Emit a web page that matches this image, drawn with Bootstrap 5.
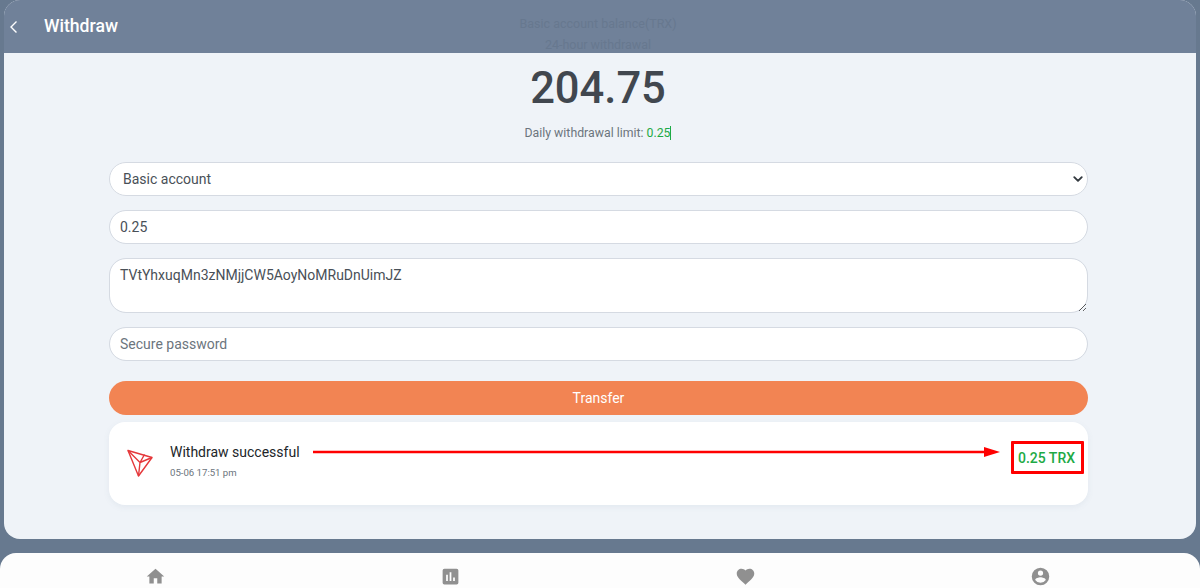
<!DOCTYPE html>
<html lang="en">
<head>
<meta charset="utf-8">
<title>Withdraw</title>
<link href="https://cdn.jsdelivr.net/npm/bootstrap@5.3.0/dist/css/bootstrap.min.css" rel="stylesheet">
<style>
html,body{height:588px;overflow:hidden}
body{background:#67798f;font-family:Roboto,"Liberation Sans",sans-serif;color:#495057;font-size:14px}
.shell{width:1192px;margin:0 4px;height:539px;background:#eff3f8;border-radius:16px;overflow:hidden}
.topbar{height:53px;background:#708199;display:grid;grid-template-columns:1fr auto 1fr;align-items:center;margin:0 -4px;padding:0 13px 0 9px;width:1200px}
.topbar-title{font-size:17.6px;font-weight:500;color:#fff;margin-left:26px;line-height:1}
.back-ico{width:9px;height:14px;flex:none}
.ghost{color:#67788f;font-size:12.5px;text-align:center;line-height:21px;padding-top:13px;height:53px;overflow:hidden}
.mainarea{padding-right:4px}
.amount{font-size:43.5px;font-weight:500;line-height:52px;color:#41474f;margin-top:10px}
.limit{font-size:12.3px;color:#6c757d;line-height:18px;margin-top:9px}
.limit b{font-weight:400;color:#1eaa45;border-right:1px solid #1eaa45}
.formwrap{width:979px;margin:20px 0 0 105px}
.formwrap .form-control,.formwrap .form-select{border-radius:17px;border:1px solid #d5dae2;background-color:#fff;font-size:14px;color:#495057;box-shadow:none}
.formwrap .form-select{height:34px;padding:0 36px 0 13px;margin-bottom:14px;background-position:right 3px center;background-size:12px 10px;background-image:url("data:image/svg+xml,%3csvg xmlns='http://www.w3.org/2000/svg' viewBox='0 0 16 16'%3e%3cpath fill='none' stroke='%23343a40' stroke-linecap='round' stroke-linejoin='round' stroke-width='3' d='m2 5 6 6 6-6'/%3e%3c/svg%3e")}
.formwrap input.form-control{height:34px;padding:0 10px;margin-bottom:14px}
.formwrap textarea.form-control{height:55px;padding:6px 10px;margin-bottom:14px;line-height:20px;border-radius:17px;min-height:0;resize:vertical}
.formwrap input.pw{margin-bottom:20px}
.formwrap ::placeholder{color:#6c757d;opacity:1}
.transfer{display:block;width:100%;height:34px;border:0;border-radius:17px;background:#f28453;color:#fff;font-size:14px;padding:0}
.rec{position:relative;height:83px;margin-top:7px;background:#fff;border-radius:16px;box-shadow:0 2px 6px rgba(90,110,140,.08);padding:0 17px;display:flex;align-items:center}
.rec-ico{width:26px;height:28px;flex:none;margin:-2px 17px 0 1px}
.rec-text{padding-bottom:6px}
.rec-t{font-size:14px;color:#212529;line-height:20px}
.rec-d{font-size:9.6px;color:#6c757d;line-height:14px;margin-top:4px}
.annot-arrow{position:absolute;left:204px;top:23px;width:687px;height:14px}
.annot-box{position:absolute;left:902px;top:19px;width:73px;height:33px;border:3px solid #f00;border-radius:1px}
.rec-a{position:absolute;left:902px;top:19px;width:73px;height:33px;padding:1px 2px 0 0;display:flex;align-items:center;justify-content:center;font-size:14px;color:#1eaa45;font-weight:500}
.tabbar{position:absolute;left:0;right:0;top:553px;height:35px;background:#fdfdfd;border-radius:16px 16px 0 0;display:grid;grid-template-columns:repeat(4,295px);padding:13px 0 0 8px;justify-items:center}
.tabbar svg{width:21px;height:21px;fill:#909090;display:block}
</style>
</head>
<body>
<div class="shell">
  <div class="topbar">
    <div class="d-flex align-items-center">
      <svg class="back-ico" viewBox="0 0 9 14"><path d="M7.5 1.5 2 7l5.5 5.5" fill="none" stroke="#fff" stroke-width="1.4"/></svg>
      <span class="topbar-title">Withdraw</span>
    </div>
    <div class="ghost">Basic account balance(TRX)<br>24-hour withdrawal</div>
    <div></div>
  </div>
  <div class="mainarea">
  <div class="text-center amount">204.75</div>
  <div class="text-center limit">Daily withdrawal limit: <b>0.25</b></div>
  <div class="formwrap">
    <select class="form-select"><option>Basic account</option></select>
    <input class="form-control" value="0.25">
    <textarea class="form-control">TVtYhxuqMn3zNMjjCW5AoyNoMRuDnUimJZ</textarea>
    <input class="form-control pw" placeholder="Secure password">
    <button class="transfer" type="button">Transfer</button>
    <div class="rec">
      <svg class="rec-ico" viewBox="0 0 26 28" fill="none" stroke="#e5383b" stroke-width="1.4" stroke-linejoin="round"><path d="M1 1.5 25 8.5 11.5 27Z"/><path d="M1 1.5 13 13.5 25 8.5M13 13.5 11.5 27M17.5 5.5 13 13.5"/></svg>
      <div class="rec-text">
        <div class="rec-t">Withdraw successful</div>
        <div class="rec-d">05-06 17:51 pm</div>
      </div>
      <svg class="annot-arrow" viewBox="0 0 687 14"><path d="M0 7H672" stroke="#f00" stroke-width="2.6"/><path d="M671 2 687 7 671 12Z" fill="#f00"/></svg>
      <div class="rec-a">0.25 TRX</div>
      <div class="annot-box"></div>
    </div>
  </div>
  </div>
</div>
<nav class="tabbar">
  <svg viewBox="0 0 24 24"><path d="M10 20v-6h4v6h5v-8h3L12 3 2 12h3v8z"/></svg>
  <svg viewBox="0 0 24 24"><path d="M19 3H5a2 2 0 0 0-2 2v14a2 2 0 0 0 2 2h14a2 2 0 0 0 2-2V5a2 2 0 0 0-2-2zM9 17H7v-7h2zm4 0h-2V7h2zm4 0h-2v-4h2z"/></svg>
  <svg viewBox="0 0 24 24"><path d="m12 21.35-1.45-1.32C5.4 15.36 2 12.28 2 8.5 2 5.42 4.42 3 7.5 3c1.74 0 3.41.81 4.5 2.09C13.09 3.81 14.76 3 16.5 3 19.58 3 22 5.42 22 8.5c0 3.78-3.4 6.86-8.55 11.54z"/></svg>
  <svg viewBox="0 0 24 24"><path d="M12 2a10 10 0 1 0 0 20 10 10 0 0 0 0-20zm0 3a3 3 0 1 1 0 6 3 3 0 0 1 0-6zm0 14.2a7.2 7.2 0 0 1-6-3.22c.03-1.99 4-3.08 6-3.08s5.97 1.09 6 3.08a7.2 7.2 0 0 1-6 3.22z"/></svg>
</nav>
<script src="https://cdn.jsdelivr.net/npm/bootstrap@5.3.0/dist/js/bootstrap.bundle.min.js"></script>
</body>
</html>
